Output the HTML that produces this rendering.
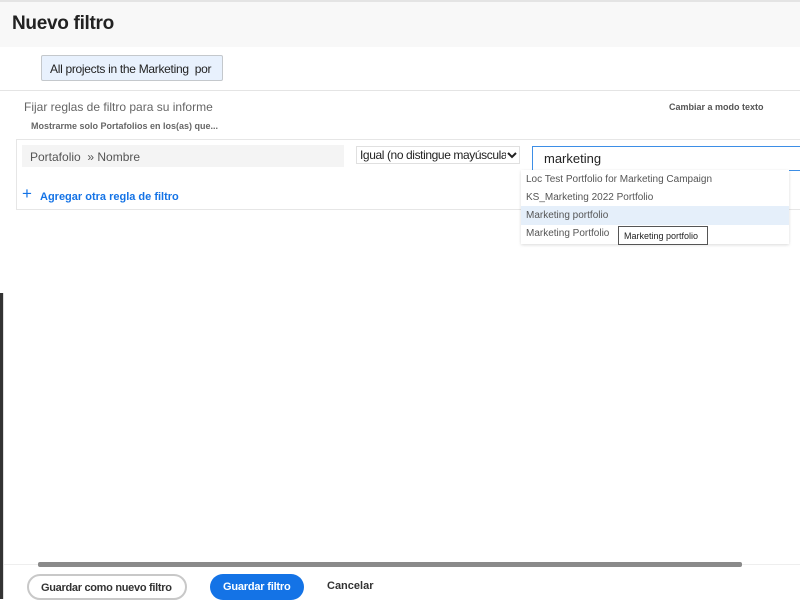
<!DOCTYPE html>
<html><head><meta charset="utf-8"><style>
*{box-sizing:border-box;margin:0;padding:0}
body{width:800px;height:599px;background:#fff;font-family:"Liberation Sans",sans-serif;position:relative;overflow:hidden;color:#333}
.a{position:absolute;white-space:nowrap}
</style></head><body>
<div class="a" style="left:0;top:0;width:800px;height:2px;background:#e4e4e4"></div>
<div class="a" style="left:0;top:2px;width:800px;height:45px;background:#f8f8f8"></div>
<div class="a" style="left:12px;top:13px;font-size:19px;font-weight:bold;color:#222;letter-spacing:-0.3px">Nuevo filtro</div>
<div class="a" style="left:41px;top:55px;width:182px;height:26px;background:#e8f1fd;border:1px solid #c4c8cc;border-radius:2px;font-size:12px;color:#222;padding:6px 0 0 8px;letter-spacing:-0.3px;overflow:hidden">All projects in the Marketing&nbsp; por</div>
<div class="a" style="left:0;top:90px;width:800px;height:1px;background:#e4e4e4"></div>
<div class="a" style="left:24px;top:100px;font-size:12px;color:#666">Fijar reglas de filtro para su informe</div>
<div class="a" style="left:31px;top:121px;font-size:9px;font-weight:bold;color:#666">Mostrarme solo Portafolios en los(as) que...</div>
<div class="a" style="left:669px;top:102px;font-size:9px;font-weight:bold;color:#555">Cambiar a modo texto</div>
<div class="a" style="left:16px;top:139px;width:790px;height:71px;border:1px solid #e6e6e6"></div>
<div class="a" style="left:22px;top:145px;width:322px;height:22px;background:#f4f4f4;font-size:12px;color:#555;padding:5px 0 0 8px">Portafolio &nbsp;» Nombre</div>
<div class="a" style="left:356px;top:146px;width:164px;height:18px;border:1px solid #e0e0e0;font-size:12px;color:#222;padding:1px 0 0 3px;overflow:hidden;letter-spacing:-0.4px">Igual (no distingue mayúscula
<svg style="position:absolute;right:1px;top:0;background:#fff" width="12" height="16"><path d="M2 6 L6 10 L10 6" fill="none" stroke="#222" stroke-width="2"/></svg></div>
<div class="a" style="left:532px;top:146px;width:270px;height:25px;border:1px solid #3d8ee6;font-size:13px;color:#222;padding:4px 0 0 11px">marketing</div>
<div class="a" style="left:22px;top:184px;font-size:17px;color:#1473e6">+</div>
<div class="a" style="left:40px;top:191px;font-size:11px;font-weight:bold;color:#1473e6">Agregar otra regla de filtro</div>
<div class="a" style="left:521px;top:170px;width:268px;height:74px;background:#fff;box-shadow:0 1px 3px rgba(0,0,0,.15)"></div>
<div class="a" style="left:521px;top:206px;width:268px;height:19px;background:#e5effa"></div>
<div class="a" style="left:526px;top:174px;font-size:10px;color:#555">Loc Test Portfolio for Marketing Campaign</div>
<div class="a" style="left:526px;top:192px;font-size:10px;color:#555">KS_Marketing 2022 Portfolio</div>
<div class="a" style="left:526px;top:210px;font-size:10px;color:#555">Marketing portfolio</div>
<div class="a" style="left:526px;top:228px;font-size:10px;color:#555">Marketing Portfolio</div>
<div class="a" style="left:618px;top:226px;width:90px;height:19px;background:#fff;border:1px solid #555;font-size:9px;color:#222;padding:4px 0 0 5px">Marketing portfolio</div>
<div class="a" style="left:0;top:293px;width:3px;height:306px;background:#333"></div>
<div class="a" style="left:3px;top:293px;width:1px;height:306px;background:#ddd"></div>
<div class="a" style="left:4px;top:564px;width:796px;height:1px;background:#eee"></div>
<div class="a" style="left:38px;top:562px;width:704px;height:5px;background:#8a8a8a;border-radius:2px"></div>
<div class="a" style="left:27px;top:574px;width:160px;height:26px;border:2px solid #c8c8c8;border-radius:14px;font-size:11px;font-weight:bold;color:#333;padding:6px 0 0 12px;letter-spacing:-0.3px">Guardar como nuevo filtro</div>
<div class="a" style="left:210px;top:574px;width:94px;height:26px;background:#1473e6;border-radius:14px;font-size:11px;font-weight:bold;color:#fff;padding:7px 0 0 13px;letter-spacing:-0.2px">Guardar filtro</div>
<div class="a" style="left:327px;top:580px;font-size:11px;font-weight:bold;color:#333">Cancelar</div>
</body></html>
